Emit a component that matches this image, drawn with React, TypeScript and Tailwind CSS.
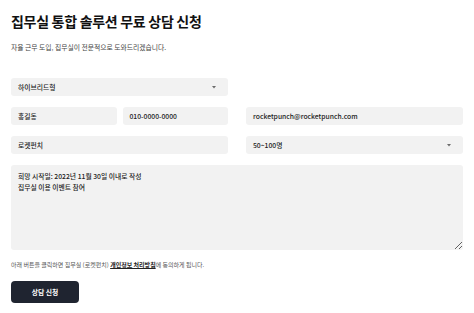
import React from 'react';

const font = { fontFamily: '"Noto Sans CJK KR", "Noto Sans", sans-serif' };

function Caret() {
    return (
        <svg width="4" height="3" viewBox="0 0 4 3" className="shrink-0">
            <path d="M0 0 L4 0 L2 2.5 Z" fill="#6b6b6b" />
        </svg>
    );
}

function Field({ value, select, className = '' }: { value: string; select?: boolean; className?: string }) {
    return (
        <div className={`h-[18px] rounded-[3px] bg-[#f2f2f2] pl-[7px] pr-[12px] flex items-center justify-between text-[6.8px] font-medium text-[#222] ${className}`}>
            <span>{value}</span>
            {select && <Caret />}
        </div>
    );
}

export default function App() {
    return (
        <div className="w-[474px] h-[313px] bg-white px-[11px] pt-[11px]" style={font}>
            <h1 className="text-[14px] font-bold tracking-[-0.3px] leading-[21px] text-[#111]">
                집무실 통합 솔루션 무료 상담 신청
            </h1>
            <p className="mt-[10px] text-[6.8px] leading-[10px] text-[#444]">
                자율 근무 도입, 집무실이 전문적으로 도와드리겠습니다.
            </p>

            <div className="mt-[26px] flex flex-col gap-[11px]">
                <div className="grid grid-cols-2 gap-[18px]">
                    <Field value="하이브리드형" select />
                    <div />
                </div>
                <div className="grid grid-cols-2 gap-[18px]">
                    <div className="grid grid-cols-2 gap-[6px]">
                        <Field value="홍길동" />
                        <Field value="010-0000-0000" />
                    </div>
                    <Field value="rocketpunch@rocketpunch.com" />
                </div>
                <div className="grid grid-cols-2 gap-[18px]">
                    <Field value="로켓펀치" />
                    <Field value="50~100명" select />
                </div>
                <textarea
                    className="block h-[85px] w-full rounded-[3px] bg-[#f2f2f2] px-[7px] py-[6px] text-[6.8px] leading-[11px] font-medium text-[#222] outline-none resize-y"
                    style={font}
                    defaultValue={'희망 시작일: 2022년 11월 30일 이내로 작성\n집무실 이용 이벤트 참여'}
                />
            </div>

            <p className="mt-[10px] text-[6px] leading-[10px] text-[#555]">
                아래 버튼을 클릭하면 집무실 (로켓펀치){' '}
                <span className="font-bold text-[#222] underline">개인정보 처리방침</span>에 동의하게 됩니다.
            </p>

            <button className="mt-[11px] h-[22px] w-[68px] rounded-[4px] bg-[#1f2430] text-white text-[6.8px] font-bold">
                상담 신청
            </button>
        </div>
    );
}
